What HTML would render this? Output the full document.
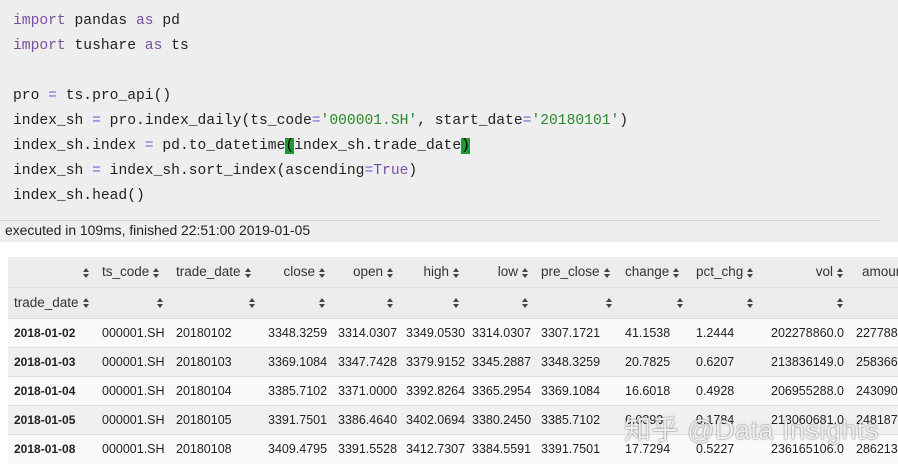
<!DOCTYPE html>
<html><head><meta charset="utf-8"><style>
body{margin:0;width:898px;height:466px;overflow:hidden;background:#fff;font-family:"Liberation Sans",sans-serif;position:relative}
.code{position:absolute;left:0;top:0;width:898px;height:242px;background:#eeeeee}
.code pre{position:absolute;left:13px;top:9px;margin:0;font-family:"Liberation Mono",monospace;font-size:14.65px;line-height:25px;color:#222}
.k{color:#7a4fa3}.o{color:#6a6ad8}.s{color:#2a8a2a}
.br{background:#1c9c2c;color:#000}
.line{position:absolute;left:0;top:220px;width:880px;height:1px;background:#d4d4d4}
.exec{position:absolute;left:5px;top:222px;font-size:13.9px;color:#222;line-height:17px}
table{position:absolute;left:8px;top:257px;width:900px;border-collapse:collapse;table-layout:fixed;font-size:12.5px;color:#222}
td,th{padding:0 6px;height:28px;white-space:nowrap;overflow:hidden;font-weight:normal;box-sizing:border-box}
th{background:#ececec;height:30px;color:#333;font-size:13.5px}
tr.h2 th{border-top:1px solid #e2e2e2;height:31px}
tbody tr td{border-top:1px solid #ddd;height:29px}
tbody tr:nth-child(odd){background:#f9f9f9}
tbody tr:nth-child(even){background:#f0f0f0}
.r{text-align:right}.l{text-align:left}
td.b{font-weight:bold;font-size:12px}
.a{display:inline-block;width:7px;height:10px;vertical-align:middle;margin-left:4px;position:relative}
.a:before,.a:after{content:"";position:absolute;left:0;border-left:3.5px solid transparent;border-right:3.5px solid transparent}
.a:before{top:0;border-bottom:4px solid #444}
.a:after{bottom:0;border-top:4px solid #444}
.wm{position:absolute;left:624px;top:408px;font-family:"Liberation Sans","Noto Sans CJK SC",sans-serif;font-size:27px;color:rgba(255,255,255,0.9);text-shadow:0 0 1px rgba(0,0,0,0.6),0 0 2px rgba(0,0,0,0.3);letter-spacing:0.5px}
</style></head><body>
<div class="code"><pre><span class="k">import</span> pandas <span class="k">as</span> pd
<span class="k">import</span> tushare <span class="k">as</span> ts

pro <span class="o">=</span> ts.pro_api()
index_sh <span class="o">=</span> pro.index_daily(ts_code<span class="o">=</span><span class="s">'000001.SH'</span>, start_date<span class="o">=</span><span class="s">'20180101'</span>)
index_sh.index <span class="o">=</span> pd.to_datetime<span class="br">(</span>index_sh.trade_date<span class="br">)</span>
index_sh <span class="o">=</span> index_sh.sort_index(ascending<span class="o">=</span><span class="k">True</span>)
index_sh.head()</pre></div>
<div class="line"></div>
<div class="exec">executed in 109ms, finished 22:51:00 2019-01-05</div>
<table>
<colgroup><col style="width:88px"><col style="width:74px"><col style="width:92px"><col style="width:70px"><col style="width:68px"><col style="width:66px"><col style="width:69px"><col style="width:84px"><col style="width:71px"><col style="width:70px"><col style="width:90px"><col style="width:58px"></colgroup>
<thead>
<tr><th class="r"><span class="a"></span></th><th class="l">ts_code<span class="a"></span></th><th class="l">trade_date<span class="a"></span></th><th class="r">close<span class="a"></span></th><th class="r">open<span class="a"></span></th><th class="r">high<span class="a"></span></th><th class="r">low<span class="a"></span></th><th class="l">pre_close<span class="a"></span></th><th class="l">change<span class="a"></span></th><th class="l">pct_chg<span class="a"></span></th><th class="r">vol<span class="a"></span></th><th class="l" style="padding-left:12px">amount</th></tr>
<tr class="h2"><th class="l">trade_date<span class="a"></span></th><th class="r"><span class="a"></span></th><th class="r"><span class="a"></span></th><th class="r"><span class="a"></span></th><th class="r"><span class="a"></span></th><th class="r"><span class="a"></span></th><th class="r"><span class="a"></span></th><th class="r"><span class="a"></span></th><th class="r"><span class="a"></span></th><th class="r"><span class="a"></span></th><th class="r"><span class="a"></span></th><th></th></tr>
</thead>
<tbody>
<tr><td class="b">2018-01-02</td><td>000001.SH</td><td>20180102</td><td class="r">3348.3259</td><td class="r">3314.0307</td><td class="r">3349.0530</td><td class="r">3314.0307</td><td>3307.1721</td><td>41.1538</td><td>1.2444</td><td class="r">202278860.0</td><td>227788</td></tr>
<tr><td class="b">2018-01-03</td><td>000001.SH</td><td>20180103</td><td class="r">3369.1084</td><td class="r">3347.7428</td><td class="r">3379.9152</td><td class="r">3345.2887</td><td>3348.3259</td><td>20.7825</td><td>0.6207</td><td class="r">213836149.0</td><td>258366</td></tr>
<tr><td class="b">2018-01-04</td><td>000001.SH</td><td>20180104</td><td class="r">3385.7102</td><td class="r">3371.0000</td><td class="r">3392.8264</td><td class="r">3365.2954</td><td>3369.1084</td><td>16.6018</td><td>0.4928</td><td class="r">206955288.0</td><td>243090</td></tr>
<tr><td class="b">2018-01-05</td><td>000001.SH</td><td>20180105</td><td class="r">3391.7501</td><td class="r">3386.4640</td><td class="r">3402.0694</td><td class="r">3380.2450</td><td>3385.7102</td><td>6.0393</td><td>0.1784</td><td class="r">213060681.0</td><td>248187</td></tr>
<tr><td class="b">2018-01-08</td><td>000001.SH</td><td>20180108</td><td class="r">3409.4795</td><td class="r">3391.5528</td><td class="r">3412.7307</td><td class="r">3384.5591</td><td>3391.7501</td><td>17.7294</td><td>0.5227</td><td class="r">236165106.0</td><td>286213</td></tr>
</tbody></table>
<div class="wm">知乎 @Data Insights</div>
</body></html>
